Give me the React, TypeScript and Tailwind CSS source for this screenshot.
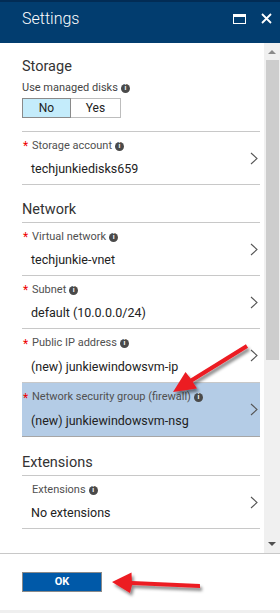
import React from "react";

const font = { fontFamily: 'Roboto, "Segoe UI", "Open Sans", sans-serif' };

const Info = () => (
  <span className="ml-[3px] inline-flex h-[9px] w-[9px] items-center justify-center rounded-full bg-[#4a4a4a] align-middle text-[7px] font-bold leading-none text-white">
    i
  </span>
);

const Chevron = () => (
  <svg width="8" height="13" viewBox="0 0 8 13" className="shrink-0">
    <path d="M1 1 L7 6.5 L1 12" fill="none" stroke="#555" strokeWidth="1.1" />
  </svg>
);

type FieldProps = {
  label: string;
  value: string;
  required?: boolean;
  selected?: boolean;
  h?: string;
};

const Field = ({ label, value, required = true, selected = false, h = "h-[53px]" }: FieldProps) => (
  <div
    className={`flex ${h} items-center border-b pr-[2px] ${
      selected ? "border-[#a6a6a6] bg-[#b4cce6]" : "border-[#c8c8c8]"
    }`}
  >
    <div className="flex flex-1 flex-col pl-[1px]">
      <div className="flex h-[16px] items-center text-[11px] text-[#505050]">
        {required ? <span className="mr-[4px] w-[5px] text-[12px] text-[#e00] leading-none">*</span> : <span className="w-[9px]" />}
        <span>{label}</span>
        <Info />
      </div>
      <div className="mt-[6px] pl-[8px] text-[12.5px] leading-[18px] text-[#222]">{value}</div>
    </div>
    <Chevron />
  </div>
);

const Heading = ({ children }: { children: React.ReactNode }) => (
  <div className="flex h-[24px] items-center text-[14.5px] text-[#333]">{children}</div>
);

export default function App() {
  return (
    <div className="relative flex h-[613px] w-[280px] flex-col overflow-hidden bg-white" style={font}>
      {/* header */}
      <div className="flex h-[43px] shrink-0 items-center border-t-2 border-[#022c55] bg-[#023d6f] pb-[8px] pl-[22px] pr-[8px]">
        <span className="flex-1 text-[16px] font-light text-white">Settings</span>
        <div className="mr-[15px] h-[10px] w-[13px] border-x-[1.5px] border-b-[1.5px] border-t-[3px] border-white" />
        <svg width="11" height="11" viewBox="0 0 11 11">
          <path d="M1 1 L10 10 M10 1 L1 10" stroke="white" strokeWidth="1.8" />
        </svg>
      </div>

      {/* body */}
      <div className="flex min-h-0 flex-1">
        <div className="flex-1 pl-[22px] pr-[4px] pt-[12px]">
          <Heading>Storage</Heading>
          <div className="mt-[1px] flex h-[16px] items-center text-[11px] text-[#444]">
            <span>Use managed disks</span>
            <Info />
          </div>
          <div className="mt-[2px] flex h-[20px] w-[99px] text-[12px] text-[#222]">
            <div className="flex w-[49px] items-center justify-center border border-[#8a8a8a] bg-[#c4ecfb]">No</div>
            <div className="flex flex-1 items-center justify-center border-y border-r border-[#bdbdbd]">Yes</div>
          </div>
          <div className="mt-[13px] border-b border-[#c8c8c8]" />
          <Field label="Storage account" value="techjunkiedisks659" />

          <div className="pt-[13px]">
            <Heading>Network</Heading>
          </div>
          <div className="border-b border-[#c8c8c8]" />
          <Field label="Virtual network" value="techjunkie-vnet" />
          <Field label="Subnet" value="default (10.0.0.0/24)" />
          <Field label="Public IP address" value="(new) junkiewindowsvm-ip" h="h-[54px]" />
          <Field label="Network security group (firewall)" value="(new) junkiewindowsvm-nsg" selected h="h-[54px]" />

          <div className="pt-[14px]">
            <Heading>Extensions</Heading>
          </div>
          <div className="border-b border-[#c8c8c8]" />
          <Field label="Extensions" value="No extensions" required={false} />
        </div>

        {/* scrollbar */}
        <div className="flex w-[16px] shrink-0 flex-col items-center bg-[#f0f0f0] py-[7px]">
          <svg width="8" height="4" viewBox="0 0 8 4">
            <path d="M0 4 L4 0 L8 4 Z" fill="#8a8a8a" />
          </svg>
          <div className="mt-[6px] h-[300px] w-[13px] bg-[#cdcdcd]" />
          <div className="flex-1" />
          <svg width="8" height="4" viewBox="0 0 8 4">
            <path d="M0 0 L8 0 L4 4 Z" fill="#505050" />
          </svg>
        </div>
      </div>

      {/* footer */}
      <div className="flex h-[57px] shrink-0 items-start border-t border-[#c8c8c8] pl-[22px] pt-[18px]">
        <button className="flex h-[20px] w-[80px] items-center justify-center border border-[#8a8a8a] bg-[#0059a8] text-[11px] font-bold text-white">
          OK
        </button>
      </div>
      <div className="h-[3px] shrink-0 bg-[#efefef]" />

      {/* annotation arrows */}
      <svg className="pointer-events-none absolute left-0 top-0" width="280" height="613" viewBox="0 0 280 613">
        <defs>
          <filter id="sh" x="-20%" y="-20%" width="140%" height="160%">
            <feDropShadow dx="2" dy="3" stdDeviation="1.6" floodColor="#000" floodOpacity="0.45" />
          </filter>
        </defs>
        <polygon
          filter="url(#sh)"
          fill="#ec1c24"
          points="245.9,344.3 190.6,378.6 185.5,372 173,392 197,388.5 192.8,382 248.1,347.7"
        />
        <polygon
          filter="url(#sh)"
          fill="#ec1c24"
          points="112,582 131.5,572.5 131.9,580.9 199.9,584 200.1,588 132.1,584.9 130,593"
        />
      </svg>
    </div>
  );
}
